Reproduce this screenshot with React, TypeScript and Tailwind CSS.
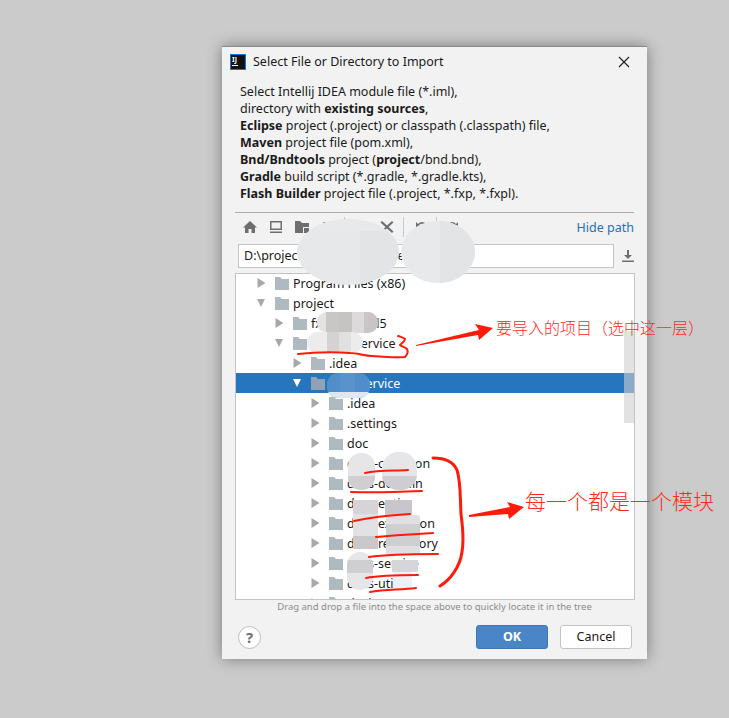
import { ReactNode } from 'react';

const UI_FONT = 'font-["Noto_Sans","Noto_Sans_CJK_SC",sans-serif]';

type Row = { level: number; label: string; open?: boolean; selected?: boolean };

const rows: Row[] = [
    { level: 0, label: 'Program Files (x86)' },
    { level: 0, label: 'project', open: true },
    { level: 1, label: 'fxxxxx-html5' },
    { level: 1, label: 'xxxxxx-service', open: true },
    { level: 2, label: '.idea' },
    { level: 2, label: 'xxxx-service', open: true, selected: true },
    { level: 3, label: '.idea' },
    { level: 3, label: '.settings' },
    { level: 3, label: 'doc' },
    { level: 3, label: 'dxxs-common' },
    { level: 3, label: 'dxxs-domain' },
    { level: 3, label: 'dxxs-enti' },
    { level: 3, label: 'dxxs-exception' },
    { level: 3, label: 'dxxs-repository' },
    { level: 3, label: 'dxxs-service' },
    { level: 3, label: 'dxxs-util' },
    { level: 3, label: 'docker' },
];

function Folder({ dim }: { dim?: boolean }) {
    return (
        <svg width="14" height="13" viewBox="0 0 14 13" className="shrink-0">
            <path d="M0 0h5l2 2h7v11H0z" fill={dim ? '#8fa3b5' : '#afb9c0'} />
        </svg>
    );
}

function Arrow({ open, selected }: { open?: boolean; selected?: boolean }) {
    return (
        <svg width="10" height="10" viewBox="0 0 10 10" className="shrink-0">
            <path d={open ? 'M1 1h8L5 9z' : 'M1.500 0l8 5-8 5z'} fill={selected ? '#ffffff' : '#a8a8a8'} />
        </svg>
    );
}

function TreeRow({ row }: { row: Row }) {
    const indent = ['pl-[20px]', 'pl-[38px]', 'pl-[56px]', 'pl-[74px]'][row.level];
    return (
        <div className={`flex h-5 shrink-0 items-center ${indent} ${row.selected ? 'bg-[#2675bf] text-white' : 'text-[#1a1a1a]'}`}>
            <Arrow open={row.open} selected={row.selected} />
            <span className="ml-[9px]"><Folder dim={row.selected} /></span>
            <span className="ml-1 whitespace-nowrap pt-[2px]">{row.label}</span>
        </div>
    );
}

function ToolIcon({ children }: { children: ReactNode }) {
    return (
        <svg width="16" height="16" viewBox="0 0 16 16" fill="#6e6e6e" className="shrink-0">
            {children}
        </svg>
    );
}

function Description() {
    return (
        <div className="mt-[6px] pl-[18px] text-[12.500px] leading-[17px] text-[#1a1a1a]">
            <div>Select Intellij IDEA module file (*.iml),</div>
            <div>directory with <b>existing sources</b>,</div>
            <div><b>Eclipse</b> project (.project) or classpath (.classpath) file,</div>
            <div><b>Maven</b> project file (pom.xml),</div>
            <div><b>Bnd/Bndtools</b> project (<b>project</b>/bnd.bnd),</div>
            <div><b>Gradle</b> build script (*.gradle, *.gradle.kts),</div>
            <div><b>Flash Builder</b> project file (.project, *.fxp, *.fxpl).</div>
        </div>
    );
}

function Toolbar() {
    return (
        <div className="mx-[13px] mt-[10px] flex h-[31px] items-center border-t border-[#ababab] pb-[2px] pl-[7px]">
            <div className="flex items-center gap-[10px]">
                <ToolIcon><path d="M8 2 1 8.500h2V14h3.500v-4h3v4H13V8.500h2z" /></ToolIcon>
                <ToolIcon><path d="M2 2h12v9H2zm1.500 1.500v6h9v-6zM2 12.500h12V14H2z" /></ToolIcon>
                <ToolIcon><path d="M1 2h5l2 2h7v4H9v6H1zM10 9h5v5h-5z" /></ToolIcon>
                <ToolIcon><path d="M3 3h10v10H3z" fill="#9a9a9a" /></ToolIcon>
            </div>
            <div className="ml-2 h-5 w-px bg-[#c9c9c9]" />
            <div className="ml-[4px] flex items-center gap-[14px]">
                <ToolIcon><path d="M3 5h10v9H3z" fill="#9a9a9a" /></ToolIcon>
                <ToolIcon><path d="m3 2 5 4.500L13 2l1.500 1.500L9.500 8l5 4.500L13 14 8 9.500 3 14l-1.500-1.500 5-4.500-5-4.500z" /></ToolIcon>
            </div>
            <div className="ml-2 h-5 w-px bg-[#c9c9c9]" />
            <div className="ml-2">
                <ToolIcon><path d="M4 3v5h5L7 6.200A4 4 0 0 1 14 9h1.500A5.500 5.500 0 0 0 6 4.900z" /></ToolIcon>
            </div>
            <div className="ml-2 h-5 w-px bg-[#c9c9c9]" />
            <div className="ml-[9px]">
                <ToolIcon><path d="M12 3v5H7l2-1.800A4 4 0 0 0 2 9H.5A5.500 5.500 0 0 1 10 4.900z" /></ToolIcon>
            </div>
            <span className="ml-auto pt-[2px] text-[12.500px] text-[#2470b3]">Hide path</span>
        </div>
    );
}

function PathField() {
    return (
        <div className="ml-[16px] mr-[12px] mt-[1px] flex h-6 items-center">
            <div className="flex h-6 w-[377px] items-center border border-[#c4c4c4] bg-white pl-[5px] text-[12.500px] text-[#1a1a1a]">
                D:\project\xxxxxxxx-service
            </div>
            <svg width="14" height="14" viewBox="0 0 14 14" fill="#6e6e6e" className="ml-[7px] shrink-0">
                <path d="M6 1h2v5h3L7 10 3 6h3zM1 11.500h12V13H1z" />
            </svg>
        </div>
    );
}

function FileTree() {
    return (
        <div className="relative mx-[13px] mt-[5px] h-[327px] w-[400px] overflow-hidden border border-[#c4c4c4] bg-white text-[12.500px]">
            <div className="-mt-[1px] flex flex-col">
                {rows.map((row, i) => (
                    <TreeRow key={i} row={row} />
                ))}
            </div>
            <div className="absolute right-0 top-[57px] h-[92px] w-[10px] bg-[#cfcfcf]/60" />
        </div>
    );
}

function Dialog() {
    return (
        <div className={`flex h-[613px] w-[425px] flex-col border-t border-[#8a8a8a] bg-[#f2f2f2] shadow-[0_0_14px_rgba(0,0,0,0.4)] ${UI_FONT}`}>
            <div className="flex h-[30px] shrink-0 items-center pl-2 pr-[17px]">
                <div className="flex h-4 w-4 flex-col border border-[#0a7ad6] bg-[#111] px-[1px] pt-[1px] text-[7px] font-bold leading-[7px] text-white">
                    <span>IJ</span>
                    <span className="mt-[2px] h-px w-[6px] bg-white" />
                </div>
                <span className="ml-[7px] text-[12.500px] text-[#1a1a1a]">Select File or Directory to Import</span>
                <svg width="12" height="12" viewBox="0 0 12 12" className="ml-auto" stroke="#222" strokeWidth="1.200">
                    <path d="M1 1l10 10M11 1 1 11" />
                </svg>
            </div>
            <Description />
            <Toolbar />
            <PathField />
            <FileTree />
            <div className="text-center text-[9.500px] leading-[14px] text-[#8c8c8c]">
                Drag and drop a file into the space above to quickly locate it in the tree
            </div>
            <div className="mt-[11px] flex items-center pl-4 pr-[15px]">
                <div className="flex h-[23px] w-[23px] items-center justify-center rounded-full border border-[#bdbdbd] bg-white text-[15px] font-bold text-[#6e6e6e]">?</div>
                <button className="ml-auto h-6 w-[72px] rounded-[3px] border border-[#3f79b5] bg-[#4a86c7] text-[12.500px] font-bold text-white">OK</button>
                <button className="ml-3 h-6 w-[72px] rounded-[3px] border border-[#c4c4c4] bg-white text-[12.500px] text-[#1a1a1a]">Cancel</button>
            </div>
        </div>
    );
}

// Red pen marks and the mosaic smudges lying over the dialog
function Annotations() {
    return (
        <svg width="729" height="718" viewBox="0 0 729 718" className="pointer-events-none absolute left-0 top-0">
            <defs>
                <clipPath id="blobA"><ellipse cx="348" cy="252" rx="51" ry="33" /></clipPath>
                <clipPath id="blobB"><ellipse cx="438" cy="252" rx="37" ry="31" /></clipPath>
                <clipPath id="blobC"><rect x="307" y="332" width="56" height="21" rx="10" /></clipPath>
                <clipPath id="blobD"><rect x="317" y="312" width="61" height="21" rx="10" /></clipPath>
                <clipPath id="blobE"><rect x="327" y="373" width="43" height="25" rx="11" /></clipPath>
                <clipPath id="blobF"><rect x="348" y="453" width="27" height="37" rx="13" /></clipPath>
                <clipPath id="blobG"><rect x="382" y="452" width="35" height="38" rx="16" /></clipPath>
                <clipPath id="blobH"><rect x="347" y="552" width="26" height="38" rx="13" /></clipPath>
            </defs>
            <g clipPath="url(#blobA)">
                <rect x="297" y="219" width="102" height="66" fill="#e7e8ea" />
                <rect x="360" y="219" width="39" height="66" fill="#e3e4e6" />
                <rect x="297" y="219" width="102" height="12" fill="#e9e9ea" />
            </g>
            <g clipPath="url(#blobB)">
                <rect x="401" y="221" width="74" height="62" fill="#e8e9eb" />
                <rect x="440" y="221" width="35" height="62" fill="#e3e4e6" />
            </g>
            <g clipPath="url(#blobD)">
                <rect x="317" y="312" width="61" height="21" fill="#e4e2e2" />
                <rect x="326" y="312" width="13" height="21" fill="#c9c6c6" />
                <rect x="339" y="312" width="13" height="21" fill="#c6c3c3" />
                <rect x="352" y="312" width="12" height="21" fill="#dcdada" />
                <rect x="364" y="312" width="14" height="21" fill="#c9c5c5" />
            </g>
            <g clipPath="url(#blobC)">
                <rect x="307" y="332" width="56" height="21" fill="#ececed" />
                <rect x="327" y="332" width="12" height="21" fill="#d3d3d3" />
                <rect x="339" y="332" width="12" height="21" fill="#e0e0e0" />
            </g>
            <g clipPath="url(#blobE)">
                <rect x="327" y="373" width="43" height="25" fill="#4f8ecb" />
                <rect x="340" y="373" width="15" height="20" fill="#5a93cc" />
                <rect x="327" y="392" width="43" height="6" fill="#dfe8f2" />
            </g>
            <g clipPath="url(#blobF)">
                <rect x="348" y="453" width="27" height="37" fill="#e6e6e8" />
                <rect x="348" y="476" width="27" height="14" fill="#cfcfd2" />
            </g>
            <g clipPath="url(#blobG)">
                <rect x="382" y="452" width="35" height="38" fill="#e6e6e8" />
                <rect x="382" y="476" width="35" height="14" fill="#cfcdd2" />
            </g>
            <rect x="353" y="500" width="25" height="48" fill="#e2e2e4" />
            <rect x="353" y="500" width="25" height="14" fill="#d6d4d8" />
            <rect x="353" y="536" width="25" height="13" fill="#c9c9cc" />
            <rect x="385" y="500" width="27" height="15" fill="#c9c6cb" />
            <rect x="386" y="515" width="34" height="40" rx="3" fill="#e0e0e2" />
            <rect x="386" y="524" width="34" height="22" fill="#cfcfd2" />
            <g clipPath="url(#blobH)">
                <rect x="347" y="552" width="26" height="38" fill="#e6e6e8" />
                <rect x="347" y="560" width="26" height="13" fill="#cfcfd2" />
            </g>
            <rect x="393" y="572" width="19" height="18" fill="#eef0f5" />
            <rect x="392" y="560" width="26" height="12" fill="#d6d6d9" />
            <g fill="none" stroke="#ff1a0a" strokeWidth="2" strokeLinecap="round" strokeLinejoin="round">
                <path d="M298 354c18-2 36-2 52-1 8 0 14 3 22 3 12 1 25 2 33 1 3-3 3-6 2-8-2-2-6-3-7-4 2-2 5-4 5-6-2-2-4-2-7-3" />
                <path d="M365 473c14-3 30-2 43-3" />
                <path d="M351 492c24 1 48 0 71-1" />
                <path d="M354 521c18-4 40-6 56-7" />
                <path d="M376 537c20-2 40-3 57-4" />
                <path d="M369 557c20-3 45-3 69-3" />
                <path d="M366 578c15-3 30-3 52-3" />
                <path d="M370 592c15-3 30-2 46-4" />
                <path d="M433 458c12 0 20 3 24 12 4 13 3 26 4 44 2 15 3 27 1 38-2 15-12 28-22 34" strokeWidth="3" />
            </g>
            <g fill="#ff1a0a">
                <path d="M416 345l63-15-4-6 18 4-14 12-1-5-62 11z" />
                <path d="M469 515l41-8-3-5 17 5-15 12-1-5-39 3z" />
            </g>
        </svg>
    );
}

export default function App() {
    return (
        <div className="relative h-[718px] w-[729px] overflow-hidden bg-[#cbcbcb]">
            <div className="pl-[222px] pt-[46px]">
                <Dialog />
            </div>
            <Annotations />
            <span className='absolute left-[496px] top-[317px] font-["Noto_Sans_CJK_SC",sans-serif] text-[16px] font-light leading-[20px] text-[#ff2a1a] whitespace-nowrap'>要导入的项目（选中这一层）</span>
            <span className='absolute left-[525px] top-[486px] font-["Noto_Sans_CJK_SC",sans-serif] text-[21px] font-light leading-[28px] text-[#ff2a1a] whitespace-nowrap'>每一个都是一个模块</span>
        </div>
    );
}
